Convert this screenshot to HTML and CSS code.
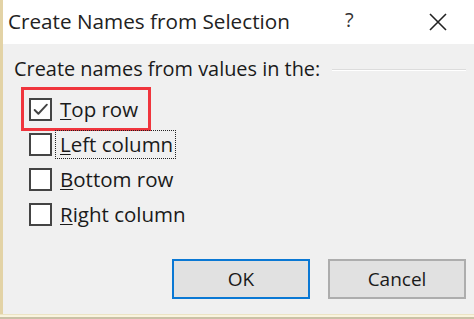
FILE: index.html
```
<!DOCTYPE html>
<html>
<head>
<meta charset="utf-8">
<link rel="stylesheet" href="styles.css">
</head>
<body>
<div class="window">
  <div class="main">
    <div class="titlebar">
      <span class="title">Create Names from Selection</span>
      <span class="help">?</span>
      <span class="close">
        <svg width="18" height="18" viewBox="0 0 18 18"><path d="M1 1 L17 17 M17 1 L1 17" stroke="#222" stroke-width="1.6" fill="none"/></svg>
      </span>
    </div>
    <div class="content">
      <div class="group-head">
        <span class="group-label">Create names from values in the:</span>
        <span class="group-line"></span>
      </div>
      <div class="options">
        <div class="option highlight">
          <span class="box">
            <svg width="17" height="17" viewBox="0 0 16 16"><path d="M2.5 8.5 L6 12 L14 3.5" stroke="#444" stroke-width="1.8" fill="none" stroke-linecap="round" stroke-linejoin="round"/></svg>
          </span>
          <span class="label"><u>T</u>op row</span>
        </div>
        <div class="option">
          <span class="box"></span>
          <span class="label focus"><u>L</u>eft column</span>
        </div>
        <div class="option">
          <span class="box"></span>
          <span class="label"><u>B</u>ottom row</span>
        </div>
        <div class="option">
          <span class="box"></span>
          <span class="label"><u>R</u>ight column</span>
        </div>
      </div>
      <div class="buttons">
        <button class="btn default">OK</button>
        <button class="btn">Cancel</button>
      </div>
    </div>
  </div>
  <div class="bottom-edge"></div>
</div>
</body>
</html>
```
FILE: styles.css
```
html, body {
  margin: 0;
  padding: 0;
  background: #ffffff;
}
.window {
  width: 474px;
  height: 319px;
  display: flex;
  flex-direction: column;
  font-family: "Open Sans", "Noto Sans", sans-serif;
  color: #1a1a1a;
  overflow: hidden;
}
.main {
  flex: 1;
  display: flex;
  flex-direction: column;
  border-left: 3px solid #e3d3a6;
}
.titlebar {
  height: 44px;
  background: #ffffff;
  display: flex;
  align-items: center;
  padding-left: 5px;
}
.title {
  font-size: 20.7px;
  line-height: 26px;
  color: #222;
  flex: 1;
  position: relative;
  top: -1px;
}
.help {
  font-size: 20px;
  line-height: 26px;
  color: #333;
  width: 20px;
  margin-right: 64px;
  position: relative;
  top: -2px;
}
.close {
  width: 18px;
  height: 18px;
  margin-right: 27px;
  display: flex;
}
.content {
  flex: 1;
  background: #f0f0f0;
  display: flex;
  flex-direction: column;
  padding: 13px 8px 0 11px;
}
.group-head {
  display: flex;
  align-items: center;
  height: 24px;
}
.group-label {
  font-size: 19.9px;
  line-height: 24px;
  color: #1a1a1a;
}
.group-line {
  flex: 1;
  height: 0;
  border-top: 1px solid #dcdcdc;
  border-bottom: 1px solid #ffffff;
  margin-left: 12px;
  margin-top: 2px;
}
.options {
  display: flex;
  flex-direction: column;
  margin-top: 6px;
}
.option {
  display: flex;
  align-items: center;
  height: 35px;
  padding-left: 15px;
  font-size: 20.5px;
  line-height: 24px;
  width: 190px;
  box-sizing: border-box;
}
.option.highlight {
  margin-left: 7px;
  padding-left: 5px;
  width: 130px;
  height: 44px;
  border: 3px solid #f0353d;
  margin-bottom: -4px;
  margin-top: 0;
}
.box {
  width: 19px;
  height: 19px;
  border: 2px solid #444;
  background: #ffffff;
  display: flex;
  align-items: center;
  justify-content: center;
  flex: none;
}
.label {
  margin-left: 4px;
  color: #1a1a1a;
  padding: 1px 3px 2px;
  border: 1px solid transparent;
}
.label u {
  text-underline-offset: 2px;
  text-decoration-thickness: 1px;
}
.label.focus {
  border: 1px dotted #222;
  margin-left: 3px;
  padding: 1px 2px 2px 4px;
}
.buttons {
  display: flex;
  justify-content: flex-end;
  gap: 18px;
  margin-top: 27px;
}
.btn {
  width: 138px;
  height: 40px;
  background: #e1e1e1;
  border: 2px solid #adadad;
  font-family: "Open Sans", "Noto Sans", sans-serif;
  font-size: 19px;
  color: #1a1a1a;
  padding: 0;
  box-sizing: border-box;
}
.btn.default {
  border: 2px solid #0a78d4;
}
.bottom-edge {
  height: 5px;
  background: #f9f4de;
  border-top: 1px solid #ece4c4;
  border-bottom: 2px solid #c9c1a6;
  box-sizing: border-box;
}
```
